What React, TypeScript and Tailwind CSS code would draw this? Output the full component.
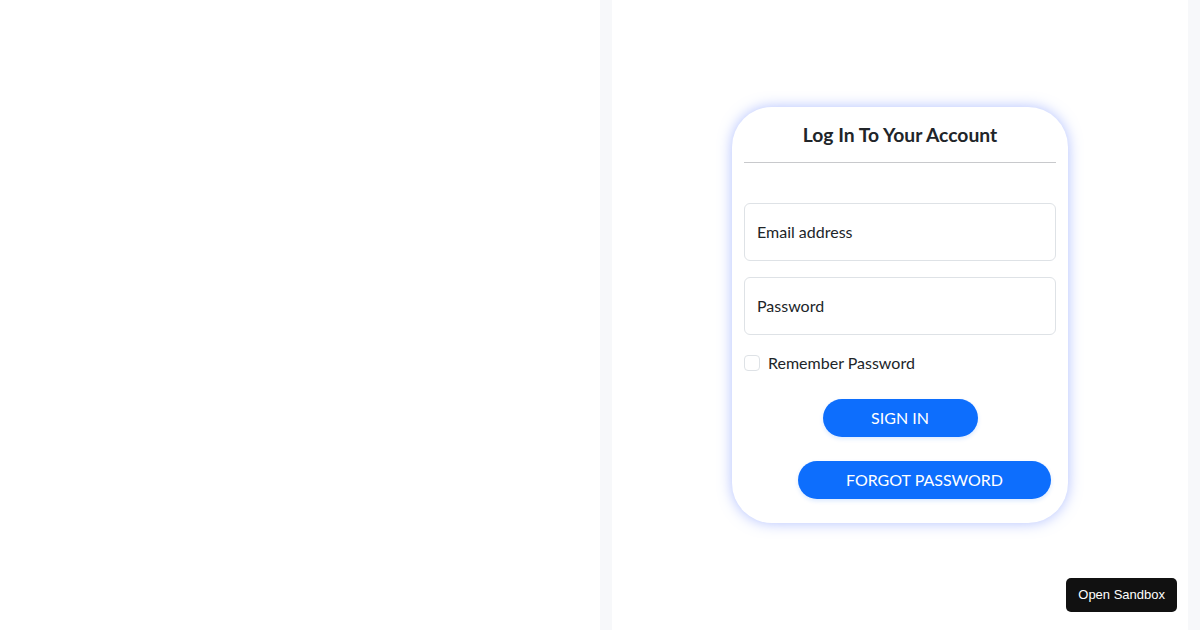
export default function App() {
  return (
    <div className="flex h-[630px] w-[1200px] overflow-hidden bg-white" style={{ fontFamily: "Lato, 'Noto Sans', sans-serif" }}>
      <div className="w-[600px] bg-white" />
      <div className="w-[12px] bg-[#f7f8fa]" />
      <div className="relative flex w-[576px] items-center justify-center bg-white">
        <div className="w-[336px] rounded-[40px] bg-white px-3 pb-6 pt-[14px] shadow-[0_0_14px_rgba(100,130,255,0.5)]">
          <h2 className="text-center text-[19.3px] font-bold leading-7 text-[#212529]">Log In To Your Account</h2>
          <hr className="mt-[13px] border-t border-[#c8c9cc]" />

          <div className="mt-10 flex h-[58px] items-center rounded-md border border-[#dee2e6] px-3 text-base text-[#212529]">
            Email address
          </div>
          <div className="mt-4 flex h-[58px] items-center rounded-md border border-[#dee2e6] px-3 text-base text-[#212529]">
            Password
          </div>

          <label className="mt-4 flex h-6 items-center gap-2 text-base text-[#212529]">
            <span className="h-4 w-4 rounded border border-[#dee2e6] bg-white" />
            Remember Password
          </label>

          <div className="mt-6 flex justify-center">
            <button className="h-[38px] w-[155px] rounded-full bg-[#0d6efd] text-base uppercase text-white shadow-[0_2px_4px_rgba(13,110,253,0.15)]">
              Sign in
            </button>
          </div>
          <div className="mt-6 flex">
            <button className="ml-[54px] h-[38px] w-[253px] rounded-full bg-[#0d6efd] text-base uppercase text-white shadow-[0_2px_4px_rgba(13,110,253,0.15)]">
              Forgot password
            </button>
          </div>
        </div>

        <button
          className="absolute bottom-[18px] right-[11px] h-[34px] rounded-[5px] bg-[#111111] px-3 text-[13px] text-white"
          style={{ fontFamily: "'Liberation Sans', Arial, sans-serif" }}
        >
          Open Sandbox
        </button>
      </div>
      <div className="w-[12px] bg-[#f7f8fa]" />
    </div>
  );
}
